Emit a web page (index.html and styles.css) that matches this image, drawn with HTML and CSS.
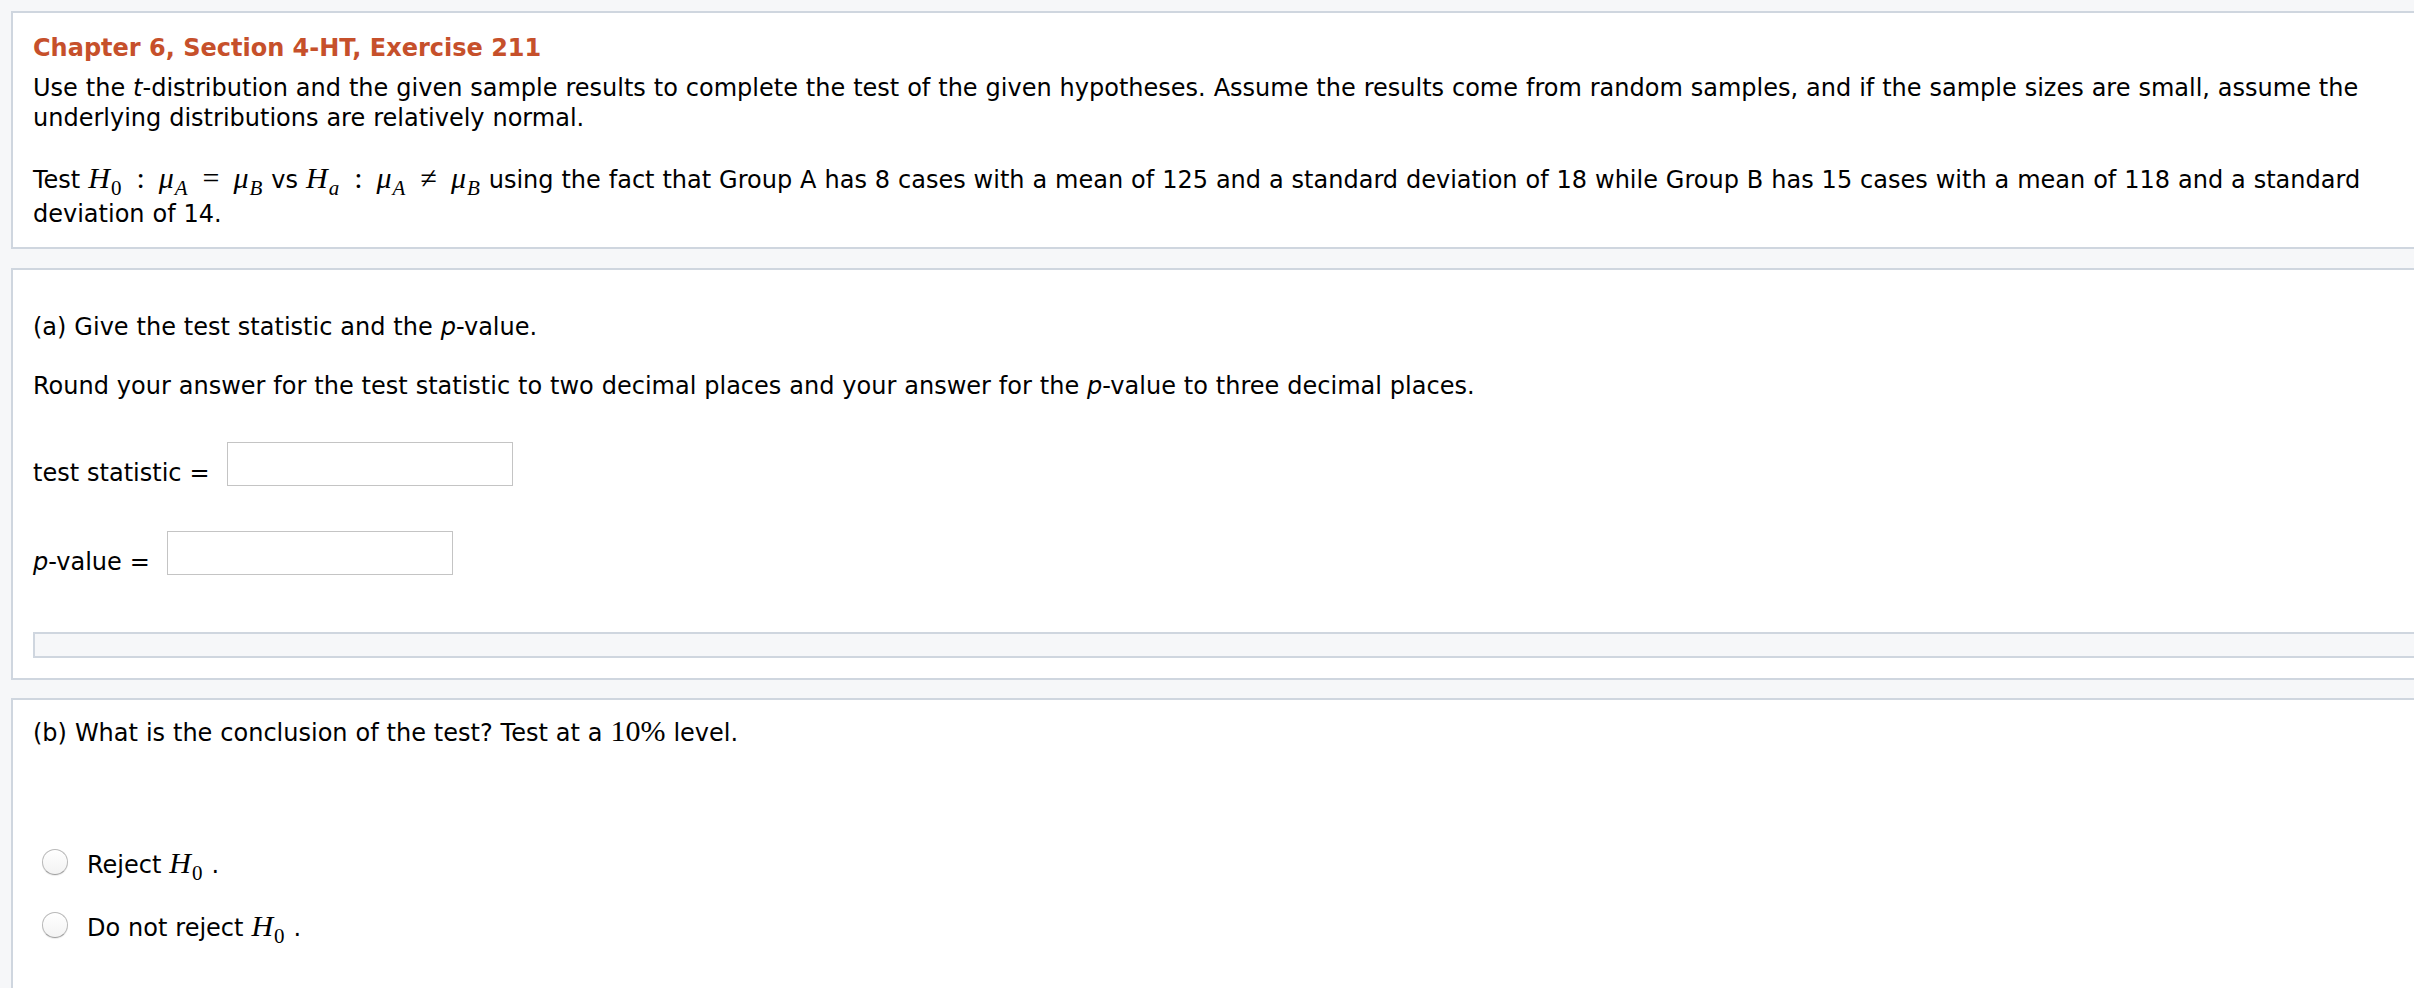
FILE: index.html
```html
<!DOCTYPE html>
<html lang="en">
<head>
<meta charset="utf-8">
<title>Chapter 6, Section 4-HT, Exercise 211</title>
<link rel="stylesheet" href="styles.css">
</head>
<body>
<div class="page">
  <section class="card intro">
    <h1 class="title">Chapter 6, Section 4-HT, Exercise 211</h1>
    <p class="para">Use the <i>t</i>-distribution and the given sample results to complete the test of the given hypotheses. Assume the results come from random samples, and if the sample sizes are small, assume the underlying distributions are relatively normal.</p>
    <p class="para">Test <span class="m"><i>H</i><sub>0</sub><span class="rel">:</span><i>μ</i><sub><i>A</i></sub><span class="rel">=</span><i>μ</i><sub><i>B</i></sub></span> vs <span class="m"><i>H</i><sub><i>a</i></sub><span class="rel">:</span><i>μ</i><sub><i>A</i></sub><span class="rel">≠</span><i>μ</i><sub><i>B</i></sub></span> using the fact that Group A has 8 cases with a mean of 125 and a standard deviation of 18 while Group B has 15 cases with a mean of 118 and a standard deviation of 14.</p>
  </section>

  <section class="card part part-a">
    <p class="para">(a) Give the test statistic and the <i>p</i>-value.</p>
    <p class="para round">Round your answer for the test statistic to two decimal places and your answer for the <i>p</i>-value to three decimal places.</p>
    <div class="answer-row row-first">
      <label class="answer-label">test statistic =</label>
      <input class="answer" type="text">
    </div>
    <div class="answer-row row-second">
      <label class="answer-label"><i>p</i>-value =</label>
      <input class="answer" type="text">
    </div>
    <div class="feedback"></div>
  </section>

  <section class="card part part-b">
    <p class="para">(b) What is the conclusion of the test? Test at a <span class="m num">10%</span> level.</p>
    <ul class="choices">
      <li class="choice"><input class="radio" type="radio" name="concl"><span class="choice-text">Reject <span class="m"><i>H</i><sub>0</sub></span> .</span></li>
      <li class="choice"><input class="radio" type="radio" name="concl"><span class="choice-text">Do not reject <span class="m"><i>H</i><sub>0</sub></span> .</span></li>
    </ul>
  </section>
</div>
</body>
</html>
```

FILE: styles.css
```css
html, body {
  overflow: hidden;
}

body {
  margin: 0;
  background: #f6f7f9;
  font-family: "DejaVu Sans", Verdana, sans-serif;
  font-size: 24px;
  line-height: 30px;
  word-spacing: 0.3px;
  color: #000;
}

.page {
  padding: 11px 0 0 11px;
  width: 2460px;
}

.card {
  background: #fff;
  border: 2px solid #cfd6df;
  border-right: none;
  padding: 20px 20px 20px 20px;
  margin-bottom: 21px;
}

.intro {
  padding-bottom: 18px;
  margin-bottom: 19px;
}

.title {
  margin: 0 0 10px 0;
  font-size: 24px;
  line-height: 30px;
  font-weight: bold;
  word-spacing: 0;
  color: #c6502b;
}

.para {
  margin: 30px 0 0 0;
}

.title + .para,
.part .para:first-child {
  margin-top: 0;
}

.m {
  font-family: "Liberation Serif", "Times New Roman", serif;
  font-size: 30px;
  line-height: 1;
  word-spacing: 0;
  white-space: nowrap;
}

.m i {
  font-style: italic;
}

.m sub {
  font-size: 21px;
  line-height: 0;
  vertical-align: -7px;
  margin-left: 1px;
  margin-right: 1px;
}

.para .m sub {
  line-height: 1;
}

.rel {
  margin: 0 14px;
}

.part-a {
  padding-top: 42px;
  margin-bottom: 18px;
}

.part-a .round {
  margin-top: 29px;
}

.answer-row {
  display: flex;
  align-items: flex-end;
  gap: 17px;
}

.row-first {
  margin-top: 41px;
}

.row-second {
  margin-top: 45px;
}

.answer-label {
  margin-bottom: -2px;
}

.answer {
  width: 286px;
  height: 44px;
  box-sizing: border-box;
  border: 1.5px solid #c4c4c4;
  border-radius: 0;
  margin: 0;
  padding: 0 6px;
  font: inherit;
  background: #fff;
}

.feedback {
  margin-top: 57px;
  height: 22px;
  background: #f6f7f9;
  border: 2px solid #cfd6df;
  border-right: none;
}

.part-b {
  padding-top: 16px;
}

.choices {
  list-style: none;
  margin: 98px 0 0 0;
  padding: 0 0 0 9px;
}

.choice {
  display: flex;
  align-items: center;
  gap: 19px;
  height: 36px;
  margin-bottom: 27px;
}

.radio {
  appearance: none;
  -webkit-appearance: none;
  width: 26px;
  height: 26px;
  margin: 0;
  border-radius: 50%;
  border: 1px solid #b9b9b9;
  border-bottom-color: #a0a0a0;
  background: linear-gradient(#ffffff, #f3f3f3);
  box-shadow: inset 0 1px 1px rgba(255,255,255,0.9), 0 1px 1px rgba(0,0,0,0.08);
  margin-top: -5px;
}
```
